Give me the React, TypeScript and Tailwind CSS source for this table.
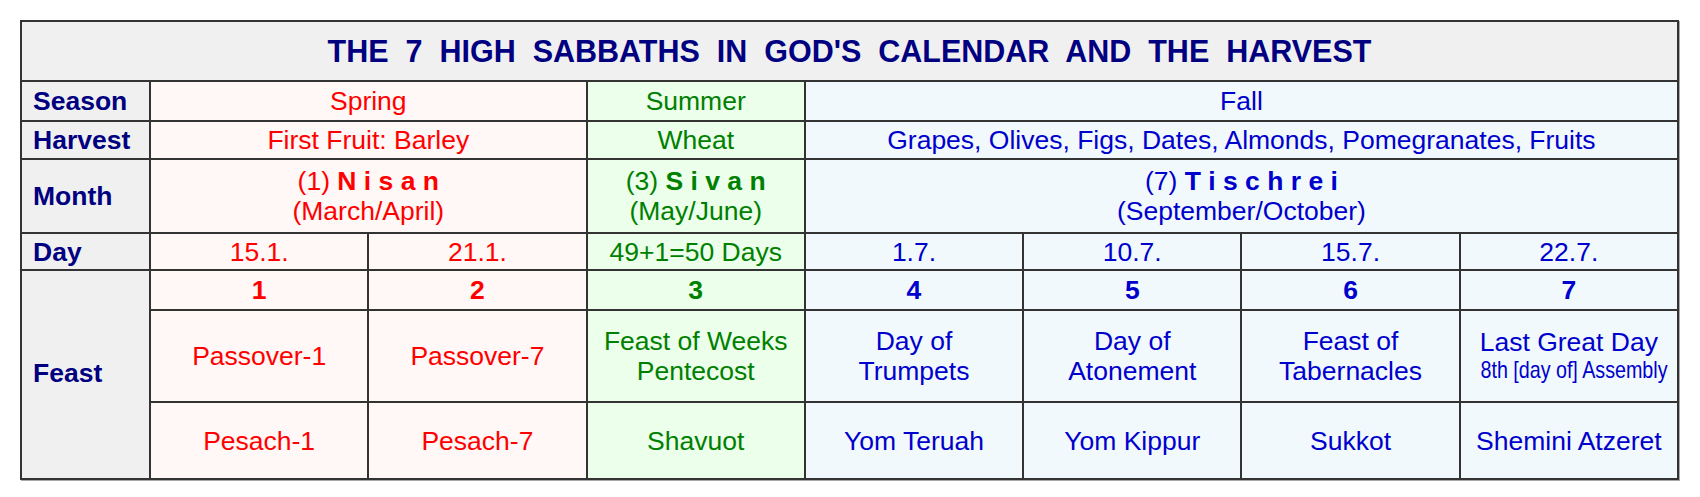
import React from "react";

const cell = "border-2 border-[#333] text-center align-middle";
const label = "border-2 border-[#333] bg-[#f0f0f0] text-left pl-[11px] font-bold text-[#000080] align-middle";
const spring = "bg-[#fff8f6] text-[#ff0000]";
const summer = "bg-[#ebffea] text-[#008000]";
const fall = "bg-[#f1f9fd] text-[#0000cc]";

type Feast = {
  n: string;
  day: string;
  name: React.ReactNode;
  hebrew: string;
  tone: string;
};

const fallFeasts: Feast[] = [
  { n: "4", day: "1.7.", name: <>Day of<br />Trumpets</>, hebrew: "Yom Teruah", tone: fall },
  { n: "5", day: "10.7.", name: <>Day of<br />Atonement</>, hebrew: "Yom Kippur", tone: fall },
  { n: "6", day: "15.7.", name: <>Feast of<br />Tabernacles</>, hebrew: "Sukkot", tone: fall },
  {
    n: "7",
    day: "22.7.",
    name: (
      <>
        <span className="block leading-[27px]">Last Great Day</span>
        <span className="block text-[24px] leading-[27px] whitespace-nowrap scale-x-[0.82]">
          8th [day of] Assembly
        </span>
      </>
    ),
    hebrew: "Shemini Atzeret",
    tone: fall,
  },
];

export default function App() {
  return (
    <div className="bg-white w-[1700px] h-[497px] pt-[20px] pl-[20px] font-['Liberation_Sans',Arial,sans-serif] text-[26.5px] leading-[30px]">
      <table className="border-collapse table-fixed w-[1659px] border-2 border-[#333] shadow-[1px_1px_0_#aaa]">
        <colgroup>
          <col className="w-[129px]" />
          <col />
          <col />
          <col />
          <col />
          <col />
          <col />
          <col />
        </colgroup>
        <tbody>
          <tr>
            <td
              colSpan={8}
              className={`${cell} h-[60px] bg-[#f0f0f0] font-bold text-[30.5px] text-[#000080] whitespace-pre`}
            >
              {"THE  7  HIGH  SABBATHS  IN  GOD'S  CALENDAR  AND  THE  HARVEST"}
            </td>
          </tr>
          <tr className="h-[40px]">
            <td className={label}>Season</td>
            <td colSpan={2} className={`${cell} ${spring}`}>Spring</td>
            <td className={`${cell} ${summer}`}>Summer</td>
            <td colSpan={4} className={`${cell} ${fall}`}>Fall</td>
          </tr>
          <tr className="h-[38px]">
            <td className={label}>Harvest</td>
            <td colSpan={2} className={`${cell} ${spring}`}>First Fruit: Barley</td>
            <td className={`${cell} ${summer}`}>Wheat</td>
            <td colSpan={4} className={`${cell} ${fall}`}>
              Grapes, Olives, Figs, Dates, Almonds, Pomegranates, Fruits
            </td>
          </tr>
          <tr className="h-[74px]">
            <td className={label}>Month</td>
            <td colSpan={2} className={`${cell} ${spring}`}>
              (1) <b>N i s a n</b>
              <br />
              (March/April)
            </td>
            <td className={`${cell} ${summer}`}>
              (3) <b>S i v a n</b>
              <br />
              (May/June)
            </td>
            <td colSpan={4} className={`${cell} ${fall}`}>
              (7) <b>T i s c h r e i</b>
              <br />
              (September/October)
            </td>
          </tr>
          <tr className="h-[37px]">
            <td className={label}>Day</td>
            <td className={`${cell} ${spring}`}>15.1.</td>
            <td className={`${cell} ${spring}`}>21.1.</td>
            <td className={`${cell} ${summer}`}>49+1=50 Days</td>
            {fallFeasts.map((f) => (
              <td key={f.day} className={`${cell} ${f.tone}`}>{f.day}</td>
            ))}
          </tr>
          <tr className="h-[40px]">
            <td rowSpan={3} className={`${label} pb-[4px]`}>Feast</td>
            <td className={`${cell} ${spring} font-bold`}>1</td>
            <td className={`${cell} ${spring} font-bold`}>2</td>
            <td className={`${cell} ${summer} font-bold`}>3</td>
            {fallFeasts.map((f) => (
              <td key={f.n} className={`${cell} ${f.tone} font-bold`}>{f.n}</td>
            ))}
          </tr>
          <tr className="h-[92px]">
            <td className={`${cell} ${spring}`}>Passover-1</td>
            <td className={`${cell} ${spring}`}>Passover-7</td>
            <td className={`${cell} ${summer}`}>
              Feast of Weeks
              <br />
              Pentecost
            </td>
            {fallFeasts.map((f) => (
              <td key={f.n} className={`${cell} ${f.tone}`}>{f.name}</td>
            ))}
          </tr>
          <tr className="h-[77px]">
            <td className={`${cell} ${spring}`}>Pesach-1</td>
            <td className={`${cell} ${spring}`}>Pesach-7</td>
            <td className={`${cell} ${summer}`}>Shavuot</td>
            {fallFeasts.map((f) => (
              <td key={f.n} className={`${cell} ${f.tone}`}>{f.hebrew}</td>
            ))}
          </tr>
        </tbody>
      </table>
    </div>
  );
}
